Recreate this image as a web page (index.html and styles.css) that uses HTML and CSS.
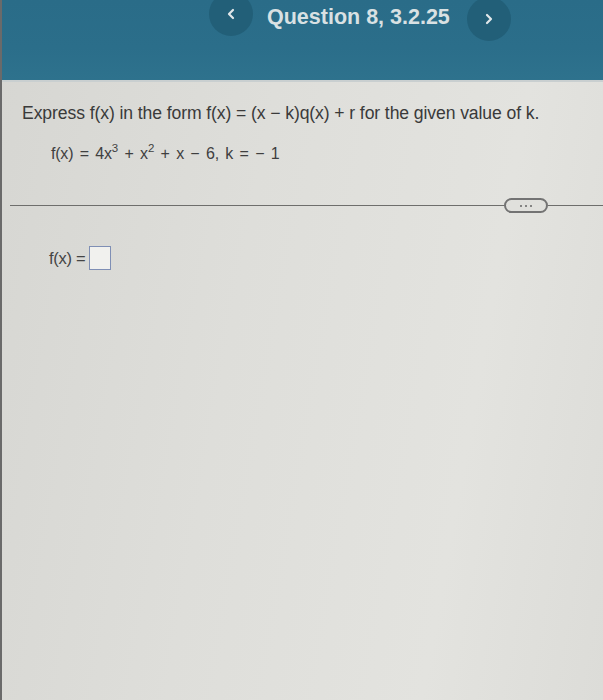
FILE: index.html
```html
<!DOCTYPE html>
<html>
<head>
<meta charset="utf-8">
<link rel="stylesheet" href="styles.css">
</head>
<body>
<header class="topbar">
  <div class="nav">
    <button class="navbtn prev" aria-label="Previous">
      <svg width="10" height="12" viewBox="0 0 10 12"><path d="M7 2 L3 6 L7 10" fill="none" stroke="#e2e8ea" stroke-width="2.2" stroke-linecap="round" stroke-linejoin="round"/></svg>
    </button>
    <h1 class="title">Question 8, 3.2.25</h1>
    <button class="navbtn next" aria-label="Next">
      <svg width="10" height="12" viewBox="0 0 10 12"><path d="M3 2 L7 6 L3 10" fill="none" stroke="#e2e8ea" stroke-width="2.2" stroke-linecap="round" stroke-linejoin="round"/></svg>
    </button>
  </div>
</header>
<main class="content">
  <section class="question">
    <p class="prompt">Express f(x) in the form f(x) = (x − k)q(x) + r for the given value of k.</p>
    <p class="given">f(x) = 4x<sup>3</sup> + x<sup>2</sup> + x − 6, k = − 1</p>
  </section>
  <div class="divider">
    <span class="line"></span>
    <span class="more"><i></i><i></i><i></i></span>
    <span class="line short"></span>
  </div>
  <section class="answer">
    <span class="label">f(x) =</span>
    <span class="box"></span>
  </section>
</main>
</body>
</html>
```
FILE: styles.css
```css
html, body {
  margin: 0;
  padding: 0;
}
body {
  width: 603px;
  height: 700px;
  overflow: hidden;
  font-family: "Liberation Sans", Arial, sans-serif;
  background: linear-gradient(100deg, #d6d6d2 0%, #dededa 40%, #e3e3df 75%, #dcdcd8 100%);
  border-left: 2px solid #6a6a6a;
  box-sizing: border-box;
}
.topbar {
  height: 82px;
  background: linear-gradient(180deg, #2a6c88 0%, #2b6e8a 60%, #2e728d 100%);
  border-bottom: 2px solid #c9cfd0;
  box-sizing: border-box;
}
.nav {
  display: flex;
  align-items: flex-start;
  padding-left: 207px;
}
.navbtn {
  width: 44px;
  height: 44px;
  border-radius: 50%;
  border: none;
  background: #225f78;
  display: flex;
  align-items: center;
  justify-content: center;
  padding: 0;
}
.prev {
  margin-top: -8px;
}
.next {
  margin-top: -3px;
  margin-left: 17px;
}
.title {
  margin: 5px 0 0 14px;
  font-size: 21.5px;
  font-weight: bold;
  color: #d9e1e3;
}
.content {
  padding-top: 21px;
}
.question {
  padding-left: 20px;
}
.prompt {
  margin: 0;
  font-size: 17.6px;
  color: #3a3a3a;
  letter-spacing: -0.1px;
}
.given {
  margin: 21px 0 0 29px;
  font-size: 16px;
  color: #3f3f3f;
  letter-spacing: -0.2px;
  word-spacing: 2.2px;
}
.given sup {
  font-size: 11.5px;
  vertical-align: 7px;
  line-height: 0;
}
.divider {
  display: flex;
  align-items: center;
  margin-top: 35px;
  margin-left: 8px;
}
.line {
  flex: 1;
  height: 1px;
  background: #6e6e6c;
}
.line.short {
  flex: 0 0 55px;
}
.more {
  width: 40px;
  height: 11px;
  border: 2px solid #737373;
  border-radius: 8px;
  display: flex;
  align-items: center;
  justify-content: center;
  gap: 3px;
  background: #e0e0dc;
}
.more i {
  width: 2px;
  height: 2px;
  background: #666;
  border-radius: 50%;
}
.answer {
  display: flex;
  align-items: center;
  margin-top: 33px;
  padding-left: 47px;
}
.label {
  font-size: 16.5px;
  color: #444;
  letter-spacing: -0.3px;
}
.box {
  width: 20px;
  height: 22px;
  border: 1.5px solid #7f8fb5;
  background: #f1f1ee;
  margin-left: 4px;
}
```
